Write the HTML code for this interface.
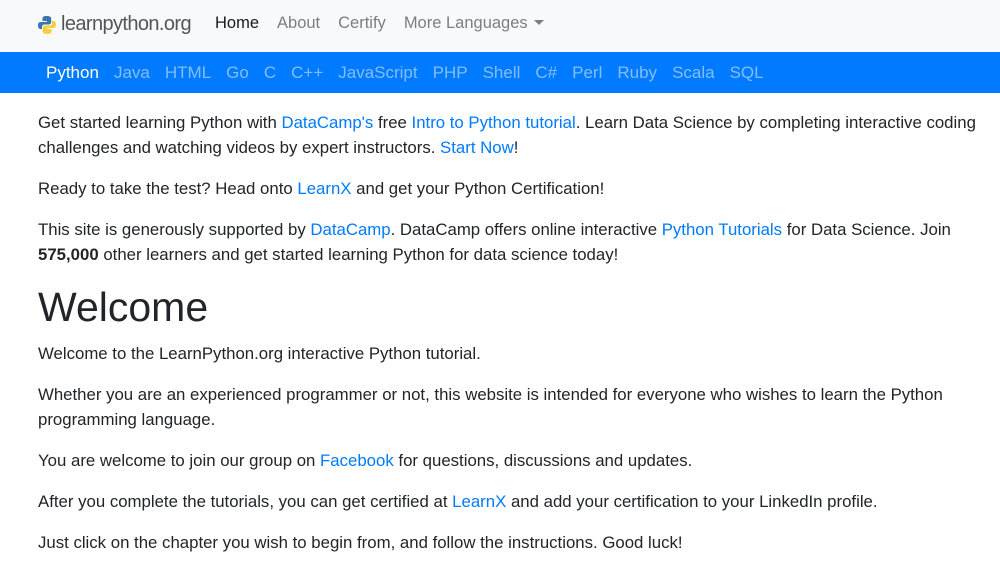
<!DOCTYPE html>
<html><head><meta charset="utf-8"><style>
body{margin:0;font-family:"Liberation Sans",Arial,sans-serif;color:#212529;background:#fff;width:1000px;height:566px;overflow:hidden}
.top{height:52px;background:#f8f9fa;position:relative}
.logo{position:absolute;left:38px;top:13px;display:flex;align-items:center}
.logo span{font-size:20px;color:#555;margin-left:5px;letter-spacing:-0.6px}
.nav1{position:absolute;left:215px;top:14px;font-size:16.5px;color:rgba(0,0,0,.5)}
.nav1 span{margin-right:18px}
.caret{display:inline-block;border-left:5px solid transparent;border-right:5px solid transparent;border-top:5px solid rgba(0,0,0,.5);vertical-align:3px;margin-left:6px}
.blue{height:41px;background:#007bff;position:relative}
.nav2{position:absolute;left:46px;top:11px;font-size:17px;color:rgba(255,255,255,.5)}
.nav2 span{margin-right:15px}
.c{padding:0 0 0 38px;width:955px}
p{font-size:16.8px;line-height:25px;margin:0 0 16px}
a{color:#007bff;text-decoration:none}
h1{font-size:41px;font-weight:500;line-height:48px;margin:0 0 10px}
</style></head><body>
<div class="top">
<div class="logo"><svg width="18" height="20" viewBox="0 0 18 20"><path d="M8.5 1C5 1 4.5 2.3 4.5 3.5V6h4.5v1H2.5C1 7 0 8.3 0 10.5S1 14 2.5 14H4v-2.2C4 10.5 5 9.5 6.5 9.5h4.5c1.3 0 2.2-1 2.2-2.2V3.5C13.2 2 11.8 1 8.5 1z" fill="#3a75b0"/><path d="M9.5 19c3.5 0 4-1.3 4-2.5V14H9v-1h6.5c1.5 0 2.5-1.3 2.5-3.5S17 6 15.5 6H14v2.2c0 1.3-1 2.3-2.5 2.3H7c-1.3 0-2.2 1-2.2 2.2v3.8C4.8 18 6.2 19 9.5 19z" fill="#f5cf3c"/></svg><span>learnpython.org</span></div>
<div class="nav1"><span style="color:rgba(0,0,0,.9)">Home</span><span>About</span><span>Certify</span><span>More Languages<i class="caret"></i></span></div>
</div>
<div class="blue"><div class="nav2"><span style="color:#fff">Python</span><span>Java</span><span>HTML</span><span>Go</span><span>C</span><span>C++</span><span>JavaScript</span><span>PHP</span><span>Shell</span><span>C#</span><span>Perl</span><span>Ruby</span><span>Scala</span><span>SQL</span></div></div>
<div class="c" style="padding-top:17px">
<p>Get started learning Python with <a>DataCamp's</a> free <a>Intro to Python tutorial</a>. Learn Data Science by completing interactive coding challenges and watching videos by expert instructors. <a>Start Now</a>!</p>
<p>Ready to take the test? Head onto <a>LearnX</a> and get your Python Certification!</p>
<p>This site is generously supported by <a>DataCamp</a>. DataCamp offers online interactive <a>Python Tutorials</a> for Data Science. Join <b>575,000</b> other learners and get started learning Python for data science today!</p>
<h1>Welcome</h1>
<p>Welcome to the LearnPython.org interactive Python tutorial.</p>
<p>Whether you are an experienced programmer or not, this website is intended for everyone who wishes to learn the Python programming language.</p>
<p>You are welcome to join our group on <a>Facebook</a> for questions, discussions and updates.</p>
<p>After you complete the tutorials, you can get certified at <a>LearnX</a> and add your certification to your LinkedIn profile.</p>
<p>Just click on the chapter you wish to begin from, and follow the instructions. Good luck!</p>
</div>
</body></html>
